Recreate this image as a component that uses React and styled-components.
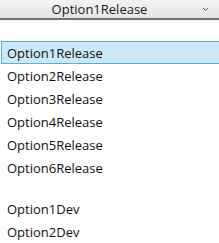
import React from 'react'
import styled, { createGlobalStyle } from 'styled-components'

const GlobalStyle = createGlobalStyle`
  html, body {
    margin: 0;
    padding: 0;
    background: #ffffff;
  }
  body {
    font-family: "Open Sans", "Noto Sans", sans-serif;
  }
`

const Wrapper = styled.div`
  width: 219px;
  height: 243px;
  overflow: hidden;
  background: #ffffff;
  display: flex;
  flex-direction: column;
`

const ComboBar = styled.div`
  height: 22px;
  display: flex;
  align-items: center;
  background: linear-gradient(#f2f2f2, #e6e6e6);
  border-bottom: 2px solid #707070;
  color: #1a1a1a;
  font-size: 13px;

  .value {
    flex: 1;
    text-align: center;
    padding-right: 3px;
  }
  .chevron {
    width: 10px;
    margin-right: 7px;
    display: flex;
    align-items: center;
  }
`

const List = styled.ul`
  list-style: none;
  margin: 0;
  padding: 21px 0 0 1px;
`

const Item = styled.li`
  height: 23px;
  box-sizing: border-box;
  padding-left: 5px;
  display: flex;
  align-items: center;
  font-size: 13px;
  color: #111111;
  background: ${p => (p.selected ? '#cce8f7' : 'transparent')};
  border: 1px solid ${p => (p.selected ? '#5aa9d6' : 'transparent')};
  border-right: none;
  margin-bottom: ${p => (p.gapAfter ? '18px' : '0')};
`

const options = [
  'Option1Release',
  'Option2Release',
  'Option3Release',
  'Option4Release',
  'Option5Release',
  'Option6Release',
  'Option1Dev',
  'Option2Dev',
]

const App = () => (
  <Wrapper>
    <GlobalStyle />
    <ComboBar>
      <span className="value">Option1Release</span>
      <span className="chevron">
        <svg width="7" height="5" viewBox="0 0 7 5">
          <path d="M1 1 L3.5 3.5 L6 1" fill="none" stroke="#606060" strokeWidth="1" />
        </svg>
      </span>
    </ComboBar>
    <List>
      {options.map((o, i) => (
        <Item key={o} selected={i === 0} gapAfter={i === 5}>
          {o}
        </Item>
      ))}
    </List>
  </Wrapper>
)

export default App
